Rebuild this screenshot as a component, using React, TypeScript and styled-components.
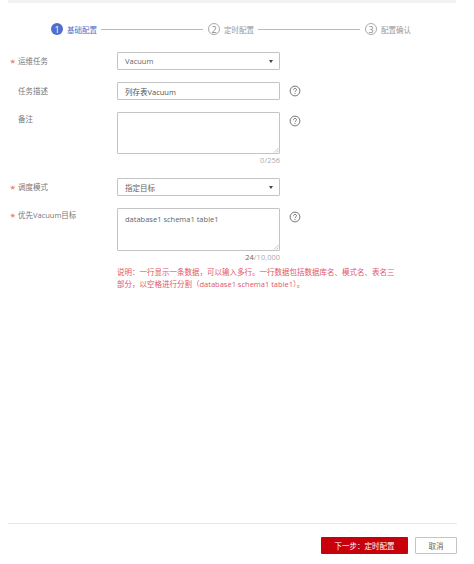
import React from "react";
import styled, { createGlobalStyle } from "styled-components";

const Global = createGlobalStyle`
  html, body { margin: 0; padding: 0; background: #fff; }
  body { font-family: "Open Sans", "Noto Sans CJK SC", sans-serif; font-size: 7.5px; color: #666; }
`;

const Page = styled.div`
  width: 474px; height: 564px; display: flex; flex-direction: column; overflow: hidden; background: #fff;
`;
const TopStrip = styled.div`
  height: 3px; margin: 0 18px 0 8px; background: #f2f2f2; flex: none;
`;
const Steps = styled.div`
  display: flex; align-items: center; height: 12px; margin-top: 20px; padding-left: 51px; width: 361px;
`;
const Step = styled.div`
  display: flex; align-items: center; gap: 4px; flex: none;
`;
const StepCircle = styled.span<{ $active?: boolean }>`
  width: 12px; height: 12px; border-radius: 50%; box-sizing: border-box; display: flex; align-items: center; justify-content: center;
  font-size: 9px; line-height: 1;
  background: ${p => (p.$active ? "#526ecc" : "#fff")};
  color: ${p => (p.$active ? "#fff" : "#8a8a8a")};
  border: ${p => (p.$active ? "none" : "1px solid #aaa")};
`;
const StepLabel = styled.span<{ $active?: boolean }>`
  font-size: 7.5px; width: 29px; white-space: nowrap; color: ${p => (p.$active ? "#526ecc" : "#999")};
`;
const StepLine = styled.span`
  height: 1px; width: 102px; background: #bbb; margin: 0 5px; flex: none;
`;
const Form = styled.div`
  display: flex; flex-direction: column; margin-top: 17px;
`;
const Row = styled.div<{ $gap: number }>`
  display: grid; grid-template-columns: 109px 163px 30px; margin: 0 0 ${p => p.$gap}px 8px; align-items: start;
`;
const Label = styled.div<{ $required?: boolean; $tall?: boolean }>`
  padding-left: 10px; position: relative; color: #777; white-space: nowrap; line-height: 18px; font-size: 7.5px;
  ${p => p.$tall && "line-height: 14px;"}
  &::before {
    content: ${p => (p.$required ? '"★"' : "none")};
    position: absolute; left: 2px; top: 0; color: #e88; font-size: 5.5px;
  }
`;
const Field = styled.div`
  display: flex; flex-direction: column; width: 163px;
`;
const boxStyle = `
  box-sizing: border-box; width: 163px; border: 1px solid #c4c4c4; border-radius: 1px; background: #fff;
  color: #666; font-size: 7.5px; padding: 0 7px;
`;
const Select = styled.div`
  ${boxStyle} height: 18px; display: flex; align-items: center; justify-content: space-between; padding-right: 6px;
`;
const Caret = styled.span`
  width: 0; height: 0; border-left: 2.5px solid transparent; border-right: 2.5px solid transparent; border-top: 3px solid #444;
`;
const Input = styled.div`
  ${boxStyle} height: 18px; display: flex; align-items: center; color: #555;
`;
const TextArea = styled.div<{ $h: number }>`
  ${boxStyle} height: ${p => p.$h}px; padding-top: 4px; line-height: 12px; position: relative;
`;
const Grip = styled.svg`
  position: absolute; right: 0; bottom: 0; width: 6px; height: 6px;
`;
const Counter = styled.div`
  text-align: right; color: #aaa; line-height: 12px; font-size: 7.5px;
`;
const CounterStrong = styled.span`
  color: #666; font-weight: 400;
`;
const Help = styled.div`
  color: #e0566a; font-size: 7.5px; line-height: 12px; width: 282px; margin-top: 3px;
`;
const HelpIcon = styled.svg`
  width: 12px; height: 12px; margin: 3px 0 0 9px; display: block;
`;
const Spacer = styled.div`
  flex: 1;
`;
const Footer = styled.div`
  margin: 0 17px 0 8px; border-top: 1px solid #e6e6e6; display: flex; justify-content: flex-end; gap: 7px;
  padding: 13px 0 0 0; height: 41px; box-sizing: border-box; flex: none;
`;
const Button = styled.div<{ $primary?: boolean }>`
  height: 17px; box-sizing: border-box; border-radius: 1px; display: flex; align-items: center; justify-content: center; font-size: 7.5px;
  width: ${p => (p.$primary ? "87px" : "42px")};
  background: ${p => (p.$primary ? "#c7000b" : "#fff")};
  color: ${p => (p.$primary ? "#fff" : "#666")};
  border: ${p => (p.$primary ? "none" : "1px solid #c4c4c4")};
`;

const Q = () => (
  <HelpIcon viewBox="0 0 12 12" fill="none">
    <circle cx="6" cy="6" r="4.9" stroke="#666" strokeWidth="0.9" />
    <path d="M4.5 4.8c0-.9.7-1.4 1.5-1.4s1.5.5 1.5 1.3c0 1.2-1.5 1.2-1.5 2.4" stroke="#666" strokeWidth="0.9" />
    <circle cx="6" cy="8.5" r="0.55" fill="#666" />
  </HelpIcon>
);
const G = () => (
  <Grip viewBox="0 0 6 6"><path d="M1 5.5L5.5 1M3.5 5.5L5.5 3.5" stroke="#aaa" strokeWidth="0.7" /></Grip>
);

export default function App() {
  return (
    <Page>
      <Global />
      <TopStrip />
      <Steps>
        <Step><StepCircle $active>1</StepCircle><StepLabel $active>基础配置</StepLabel></Step>
        <StepLine />
        <Step><StepCircle>2</StepCircle><StepLabel>定时配置</StepLabel></Step>
        <StepLine />
        <Step><StepCircle>3</StepCircle><StepLabel>配置确认</StepLabel></Step>
      </Steps>
      <Form>
        <Row $gap={12}>
          <Label $required>运维任务</Label>
          <Field><Select>Vacuum<Caret /></Select></Field>
        </Row>
        <Row $gap={12}>
          <Label>任务描述</Label>
          <Field><Input>列存表Vacuum</Input></Field>
          <Q />
        </Row>
        <Row $gap={12}>
          <Label $tall>备注</Label>
          <Field><TextArea $h={42}><G /></TextArea><Counter>0/256</Counter></Field>
          <Q />
        </Row>
        <Row $gap={12}>
          <Label $required>调度模式</Label>
          <Field><Select>指定目标<Caret /></Select></Field>
        </Row>
        <Row $gap={0}>
          <Label $required $tall>优先Vacuum目标</Label>
          <Field>
            <TextArea $h={43}>database1 schema1 table1<G /></TextArea>
            <Counter><CounterStrong>24</CounterStrong>/10,000</Counter>
            <Help>说明：一行显示一条数据，可以输入多行。一行数据包括数据库名、模式名、表名三部分，以空格进行分割（database1 schema1 table1）。</Help>
          </Field>
          <Q />
        </Row>
      </Form>
      <Spacer />
      <Footer>
        <Button $primary>下一步：定时配置</Button>
        <Button>取消</Button>
      </Footer>
    </Page>
  );
}
